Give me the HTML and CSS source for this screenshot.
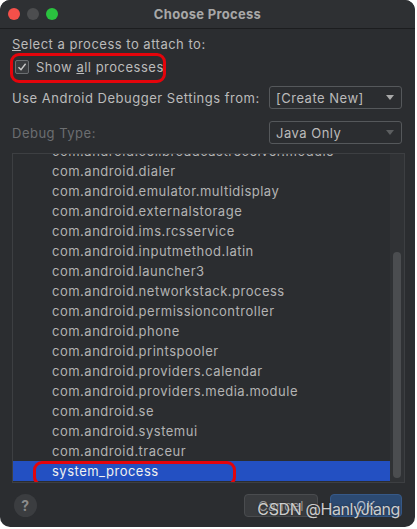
FILE: index.html
```html
<!DOCTYPE html>
<html>
<head>
    <meta charset="utf-8">
    <title>Choose Process</title>
    <link rel="stylesheet" href="styles.css">
</head>
<body>

<div class="window">

    <div class="titlebar">
        <div class="lights">
            <span class="light red"></span>
            <span class="light gray"></span>
            <span class="light green"></span>
        </div>
        <div class="title">Choose Process</div>
        <div></div>
    </div>

    <div class="content">
        <div class="caption"><u>S</u>elect a process to attach to:</div>

        <div class="check-row">
            <span class="checkbox">
                <svg width="10" height="10" viewBox="0 0 10 10"><path d="M1.5 5.2 L4 7.8 L8.6 1.8" fill="none" stroke="#c9c9c9" stroke-width="1.4"/></svg>
            </span>
            <span>Show <u>a</u>ll processes</span>
            <span class="mark mark-check"></span>
        </div>

        <div class="field-row">
            <span>Use Android Debugger Settings from:</span>
            <div class="combo">
                <span>[Create New]</span>
                <span class="arrow"></span>
            </div>
        </div>

        <div class="field-row second">
            <span class="disabled">Debug Type:</span>
            <div class="combo">
                <span>Java Only</span>
                <span class="arrow dim"></span>
            </div>
        </div>

        <div class="list">
            <ul class="rows">
                <li>com.android.cellbroadcastreceiver.module</li>
                <li>com.android.dialer</li>
                <li>com.android.emulator.multidisplay</li>
                <li>com.android.externalstorage</li>
                <li>com.android.ims.rcsservice</li>
                <li>com.android.inputmethod.latin</li>
                <li>com.android.launcher3</li>
                <li>com.android.networkstack.process</li>
                <li>com.android.permissioncontroller</li>
                <li>com.android.phone</li>
                <li>com.android.printspooler</li>
                <li>com.android.providers.calendar</li>
                <li>com.android.providers.media.module</li>
                <li>com.android.se</li>
                <li>com.android.systemui</li>
                <li>com.android.traceur</li>
                <li class="selected">system_process<span class="mark mark-row"></span></li>
            </ul>
            <div class="scrollbar"><div class="thumb"></div></div>
        </div>

        <div class="footer">
            <span class="help">?</span>
            <div class="buttons">
                <button class="btn">Cancel</button>
                <button class="btn ok">OK</button>
            </div>
        </div>
    </div>

    <div class="watermark">CSDN @HanlyJiang</div>
</div>

</body>
</html>
```

FILE: styles.css
```css
body, html {
    margin: 0;
    padding: 0;
    background-color: white;
    font-family: Inter, "Noto Sans", sans-serif;
}

.window {
    position: relative;
    width: 415px;
    height: 527px;
    background-color: #2b2d30;
    border-radius: 10px;
    overflow: hidden;
    color: #bbbbbb;
    font-size: 13px;
    letter-spacing: 0.5px;
}

.titlebar {
    display: grid;
    grid-template-columns: 1fr auto 1fr;
    align-items: center;
    height: 28px;
    background-color: #2e3033;
    border-bottom: 1px solid #1c1d1f;
}

.lights {
    display: flex;
    gap: 7px;
    padding-left: 8px;
}

.light {
    width: 12px;
    height: 12px;
    border-radius: 50%;
}
.red { background-color: #f5504a; }
.gray { background-color: #4c4d4f; }
.green { background-color: #2ac23f; }

.title {
    font-weight: bold;
    color: #a8a8a8;
    letter-spacing: 0.3px;
}

.content {
    padding: 0 10px 0 12px;
}

.caption {
    margin-top: 7px;
    line-height: 16px;
}

.check-row {
    position: relative;
    display: flex;
    align-items: center;
    gap: 7px;
    height: 22px;
    margin-top: 4px;
}

.checkbox {
    display: flex;
    align-items: center;
    justify-content: center;
    width: 12px;
    height: 12px;
    margin-left: 3px;
    border: 1px solid #6b6e71;
    border-radius: 2px;
    background-color: #3a3c3f;
}

.mark {
    position: absolute;
    border: 3px solid #e4040b;
    border-radius: 9px;
}

.mark-check {
    left: -2px;
    top: -3px;
    width: 150px;
    height: 24px;
}

.field-row {
    display: flex;
    align-items: center;
    justify-content: space-between;
    margin-top: 8px;
}

.field-row.second {
    margin-top: 12px;
}

.disabled {
    color: #6c6e70;
}

.combo {
    display: flex;
    align-items: center;
    justify-content: space-between;
    box-sizing: border-box;
    width: 133px;
    height: 23px;
    margin-right: 3px;
    padding: 0 7px 0 6px;
    border: 1px solid #55585b;
    border-radius: 3px;
}

.arrow {
    width: 0;
    height: 0;
    border-left: 4.5px solid transparent;
    border-right: 4.5px solid transparent;
    border-top: 5px solid #a9a9a9;
}

.arrow.dim {
    border-top-color: #5c5e60;
}

.list {
    display: flex;
    height: 328px;
    margin-top: 9px;
    border: 1px solid #3d3f42;
    overflow: hidden;
}

.rows {
    flex: 1;
    list-style: none;
    margin: -13px 0 0 0;
    padding: 0;
}

.rows li {
    position: relative;
    height: 20px;
    line-height: 20px;
    padding-left: 39px;
    color: #b3b3b3;
}

.rows li.selected {
    background-color: #2350c2;
    color: #f0f0f0;
}

.mark-row {
    left: 20px;
    top: 0;
    width: 197px;
    height: 19px;
}

.scrollbar {
    width: 14px;
    background-color: #303235;
}

.thumb {
    width: 8px;
    height: 226px;
    margin: 98px 0 0 3px;
    border-radius: 4px;
    background-color: #4b4d50;
}

.footer {
    display: flex;
    align-items: center;
    justify-content: space-between;
    margin-top: 11px;
}

.help {
    display: flex;
    align-items: center;
    justify-content: center;
    width: 23px;
    height: 23px;
    margin-left: 2px;
    border-radius: 50%;
    background-color: #3b3d40;
    color: #8c8c8c;
    font-weight: bold;
    font-size: 14px;
}

.buttons {
    display: flex;
    gap: 12px;
    margin-right: 3px;
}

.btn {
    width: 74px;
    height: 23px;
    border: 1px solid #4a4c4f;
    border-radius: 4px;
    background-color: #393b3e;
    color: #9a9a9a;
    font-family: Inter, "Noto Sans", sans-serif;
    font-size: 13px;
    letter-spacing: 0.5px;
}

.btn.ok {
    width: 72px;
    background-color: #2c4a72;
    border-color: #365988;
    color: #a9b6c8;
}

.watermark {
    position: absolute;
    right: 15px;
    bottom: 8px;
    font-size: 16px;
    letter-spacing: -0.4px;
    color: rgba(235, 235, 235, 0.85);
    text-shadow: 0 0 2px #222;
}
```
